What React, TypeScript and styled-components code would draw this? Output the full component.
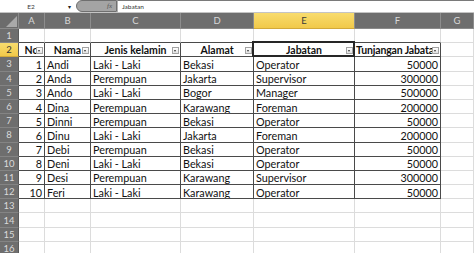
import React from 'react';
import styled, { createGlobalStyle, css } from 'styled-components';

const Global = createGlobalStyle`
  *, *::before, *::after { box-sizing: border-box; }
  html, body { margin: 0; padding: 0; background: #fff; overflow: hidden; }
  body { font-family: Lato, "Open Sans", sans-serif; }
`;

const Window = styled.div`
  width: 474px;
  height: 253px;
  display: flex;
  flex-direction: column;
  overflow: hidden;
  background: #fff;
`;

const FormulaBar = styled.div`
  flex: none;
  height: 13px;
  display: flex;
  align-items: stretch;
  border-bottom: 1px solid #c4c4c4;
  background: #fff;
`;

const NameBox = styled.div`
  width: 76px;
  display: flex;
  align-items: center;
  font-size: 6.5px;
  color: #3a3a3a;
`;

const NameText = styled.span`
  flex: 1;
  text-align: center;
  padding-right: 6px;
`;

const NameArrow = styled.span`
  width: 8px;
  font-size: 6px;
  color: #222;
`;

const FxPanel = styled.div`
  width: 41px;
  display: flex;
  align-items: center;
  justify-content: flex-end;
  padding-right: 4px;
  background: #a4a4a4;
  border: 1px solid #6f6f6f;
  border-radius: 6px 0 0 6px;
  font-family: "Liberation Serif", serif;
  font-style: italic;
  font-size: 7px;
  color: #555;
`;

const FormulaInput = styled.div`
  flex: 1;
  display: flex;
  align-items: center;
  padding-left: 4px;
  border-top: 1px solid #7a7a7a;
  border-left: 1px solid #b0b0b0;
  font-size: 6.5px;
  color: #333;
`;

const Sheet = styled.div`
  display: grid;
  grid-template-columns: 19px 26px 46px 90px 73px 101px 86px 1fr;
  grid-template-rows: 16px repeat(16, 14.2px);
  font-size: 10.8px;
  color: #111;
`;

const Corner = styled.div`
  position: relative;
  background: #6c6c6c;
  border-right: 1px solid #8a8a8a;
  border-bottom: 1px solid #8a8a8a;
  overflow: hidden;
`;

const CornerTriangle = styled.svg`
  position: absolute;
  right: 1px;
  bottom: 1px;
`;

const ColHeader = styled.div<{ $active?: boolean }>`
  display: flex;
  align-items: center;
  justify-content: center;
  font-size: 9.5px;
  background: #6e6e6e;
  color: #d9d9d9;
  border-right: 1px solid #8d8d8d;
  border-bottom: 1px solid #8a8a8a;
  ${(p) =>
    p.$active &&
    css`
      background: linear-gradient(#f8dc6e, #f1c94a);
      color: #3a3a3a;
      border-bottom-color: #d2a93a;
    `}
`;

const RowHeader = styled.div<{ $active?: boolean }>`
  display: flex;
  align-items: center;
  justify-content: center;
  font-size: 9.5px;
  background: #6e6e6e;
  color: #dadada;
  border-right: 1px solid #5a5a5a;
  border-bottom: 1px solid #848484;
  ${(p) =>
    p.$active &&
    css`
      background: linear-gradient(#f8dc6e, #f1c94a);
      color: #333;
      border-bottom-color: #d2a93a;
    `}
`;

const Cell = styled.div<{ $boxed?: boolean; $topEdge?: boolean; $right?: boolean }>`
  display: flex;
  align-items: center;
  justify-content: ${(p) => (p.$right ? 'flex-end' : 'flex-start')};
  padding: 1px 2px 0 2px;
  white-space: nowrap;
  overflow: hidden;
  border-right: 1px solid ${(p) => (p.$boxed ? '#4a4a4a' : '#dcdcdc')};
  border-bottom: 1px solid ${(p) => (p.$boxed || p.$topEdge ? '#4a4a4a' : '#dcdcdc')};
`;

const HeaderCell = styled.div<{ $active?: boolean }>`
  position: relative;
  display: flex;
  align-items: center;
  font-weight: 700;
  font-size: 10.5px;
  border-right: 1px solid #4a4a4a;
  border-bottom: 1px solid #4a4a4a;
  ${(p) =>
    p.$active &&
    css`
      &::after {
        content: '';
        position: absolute;
        inset: -2px -1px -1px -2px;
        border: 2px solid #262626;
        pointer-events: none;
        z-index: 2;
      }
    `}
`;

const Label = styled.span<{ $left?: boolean }>`
  display: block;
  width: 100%;
  padding: ${(p) => (p.$left ? '1px 0 0 1px' : '1px 0 0 0')};
  white-space: nowrap;
  overflow: hidden;
  text-align: ${(p) => (p.$left ? 'left' : 'center')};
  letter-spacing: ${(p) => (p.$left ? '-0.15px' : '0')};
  clip-path: inset(0 8px 0 0);
`;

const FilterButton = styled.span`
  position: absolute;
  right: 1px;
  top: 4px;
  width: 7px;
  height: 7px;
  border: 1px solid #a3a3a3;
  background: linear-gradient(#ffffff, #e2e2e2);
  z-index: 3;
  &::after {
    content: '';
    position: absolute;
    left: 1px;
    bottom: 1px;
    border-left: 1.5px solid transparent;
    border-right: 1.5px solid transparent;
    border-top: 2px solid #333;
  }
`;

const columns = ['A', 'B', 'C', 'D', 'E', 'F', 'G'];
const headers = ['No', 'Nama', 'Jenis kelamin', 'Alamat', 'Jabatan', 'Tunjangan Jabatan'];

const data: [number, string, string, string, string, number][] = [
  [1, 'Andi', 'Laki - Laki', 'Bekasi', 'Operator', 50000],
  [2, 'Anda', 'Perempuan', 'Jakarta', 'Supervisor', 300000],
  [3, 'Ando', 'Laki - Laki', 'Bogor', 'Manager', 500000],
  [4, 'Dina', 'Perempuan', 'Karawang', 'Foreman', 200000],
  [5, 'Dinni', 'Perempuan', 'Bekasi', 'Operator', 50000],
  [6, 'Dinu', 'Laki - Laki', 'Jakarta', 'Foreman', 200000],
  [7, 'Debi', 'Perempuan', 'Bekasi', 'Operator', 50000],
  [8, 'Deni', 'Laki - Laki', 'Bekasi', 'Operator', 50000],
  [9, 'Desi', 'Perempuan', 'Karawang', 'Supervisor', 300000],
  [10, 'Feri', 'Laki - Laki', 'Karawang', 'Operator', 50000],
];

export default function App() {
  const emptyRow = (r: number, topEdge = false) => (
    <React.Fragment key={r}>
      <RowHeader>{r}</RowHeader>
      {columns.map((c, i) => (
        <Cell key={c} $topEdge={topEdge && i < 6} />
      ))}
    </React.Fragment>
  );

  return (
    <Window>
      <Global />
      <FormulaBar>
        <NameBox>
          <NameText>E2</NameText>
          <NameArrow>▾</NameArrow>
        </NameBox>
        <FxPanel>fx</FxPanel>
        <FormulaInput>Jabatan</FormulaInput>
      </FormulaBar>
      <Sheet>
        <Corner>
          <CornerTriangle width="11" height="11" viewBox="0 0 11 11">
            <polygon points="11,0 11,11 0,11" fill="#a9a9a9" />
          </CornerTriangle>
        </Corner>
        {columns.map((c) => (
          <ColHeader key={c} $active={c === 'E'}>
            {c}
          </ColHeader>
        ))}
        {emptyRow(1, true)}
        <RowHeader $active>2</RowHeader>
        {headers.map((h, i) => (
          <HeaderCell key={h} $active={i === 4}>
            <Label $left={i === 5}>{h}</Label>
            <FilterButton />
          </HeaderCell>
        ))}
        <Cell />
        {data.map((row, r) => (
          <React.Fragment key={r}>
            <RowHeader>{r + 3}</RowHeader>
            {row.map((v, i) => (
              <Cell key={i} $boxed $right={typeof v === 'number'}>
                {v}
              </Cell>
            ))}
            <Cell />
          </React.Fragment>
        ))}
        {[13, 14, 15, 16].map((r) => emptyRow(r))}
      </Sheet>
    </Window>
  );
}
